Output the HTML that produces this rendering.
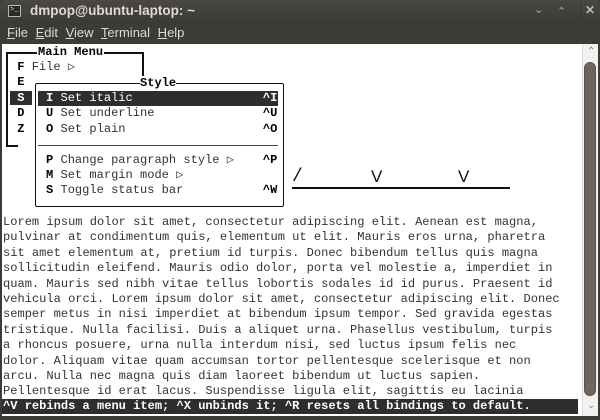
<!DOCTYPE html>
<html><head><style>
*{margin:0;padding:0;box-sizing:border-box}
body{width:600px;height:420px;overflow:hidden;background:#3c3b37;position:relative;font-family:"Liberation Sans",sans-serif}
#tb{position:absolute;left:0;top:0;width:600px;height:23px;background:linear-gradient(#4a4844,#3c3a36);border-radius:5px 5px 0 0}
#mb{position:absolute;left:0;top:23px;width:600px;height:21px;background:#3c3b37}
#term{position:absolute;left:2px;top:44px;width:596px;height:372px;background:#fff}
.t{position:absolute;font-family:"Liberation Mono",monospace;font-size:12.05px;line-height:15.4px;white-space:pre;color:#333}
.b{font-weight:bold;color:#000}
.ln{position:absolute;background:#111}
</style></head><body>
<div id="tb">
<div style="position:absolute;left:8px;top:5px;width:13px;height:12px;border:1px solid #bbb;background:#2a2a2a;border-radius:1px"><div style="position:absolute;left:1px;top:1px;color:#ddd;font-size:7px;line-height:7px;font-family:'Liberation Mono'">&gt;_</div></div>
<div style="position:absolute;left:30px;top:3px;color:#dfdbd2;font-weight:bold;font-size:13.5px">dmpop@ubuntu-laptop: ~</div>
<div style="position:absolute;left:534px;top:3px;color:#aaa;font-size:11px">&#8964;</div>
<div style="position:absolute;left:557px;top:5px;color:#aaa;font-size:11px">&#8963;</div>
<div style="position:absolute;left:580px;top:2px;width:1px;height:16px;background:#333"></div>
<div style="position:absolute;left:585px;top:3px;color:#bbb;font-size:12px;font-weight:bold">&#10005;</div>
</div>
<div id="mb"><div style="position:absolute;left:7px;top:2px;color:#dfdbd2;font-size:13px;word-spacing:4px"><u>F</u>ile <u>E</u>dit <u>V</u>iew <u>T</u>erminal <u>H</u>elp</div></div>
<div id="term">
<div class="t" style="left:1px;top:171px">Lorem ipsum dolor sit amet, consectetur adipiscing elit. Aenean est magna,
pulvinar at condimentum quis, elementum ut elit. Mauris eros urna, pharetra
sit amet elementum at, pretium id turpis. Donec bibendum tellus quis magna
sollicitudin eleifend. Mauris odio dolor, porta vel molestie a, imperdiet in
quam. Mauris sed nibh vitae tellus lobortis sodales id id purus. Praesent id
vehicula orci. Lorem ipsum dolor sit amet, consectetur adipiscing elit. Donec
semper metus in nisi imperdiet at bibendum ipsum tempor. Sed gravida egestas
tristique. Nulla facilisi. Duis a aliquet urna. Phasellus vestibulum, turpis
a rhoncus posuere, urna nulla interdum nisi, sed luctus ipsum felis nec
dolor. Aliquam vitae quam accumsan tortor pellentesque scelerisque et non
arcu. Nulla nec magna quis diam laoreet bibendum ut luctus sapien.
Pellentesque id erat lacus. Suspendisse ligula elit, sagittis eu lacinia</div>
<div style="position:absolute;left:0;top:355px;width:576px;height:15px;background:#2e2e2e"></div>
<div class="t b" style="left:1px;top:355px;color:#fff">^V rebinds a menu item; ^X unbinds it; ^R resets all bindings to default.</div>
<!-- main menu box -->
<div class="ln" style="left:4px;top:8px;width:1.5px;height:95px"></div>
<div class="ln" style="left:4px;top:8px;width:31px;height:1.5px"></div>
<div class="ln" style="left:102px;top:8px;width:40px;height:1.5px"></div>
<div class="ln" style="left:140px;top:8px;width:1.5px;height:30px"></div>
<div class="ln" style="left:4px;top:101px;width:12px;height:1.5px"></div>
<div class="t b" style="left:36px;top:1px">Main Menu</div>
<div class="t" style="left:8px;top:16px"> <b style="color:#000">F</b> File ▷
 <b style="color:#000">E</b>
<span style="background:#2e2e2e"> <b style="color:#fff">S</b> </span>
 <b style="color:#000">D</b>
 <b style="color:#000">Z</b></div>
<!-- style box -->
<div style="position:absolute;left:33px;top:39px;width:249px;height:124px;background:#fff;border:1.5px solid #111;border-radius:2px"></div>
<div class="t b" style="left:138px;top:32px;background:#fff">Style</div>
<div style="position:absolute;left:36px;top:47px;width:240px;height:15px;background:#2e2e2e"></div>
<div class="ln" style="left:36px;top:101px;width:240px;height:1.2px;background:#444"></div>
<div class="t" style="left:44px;top:47px"><b style="color:#fff">I</b><span style="color:#fff"> Set italic                  </span><b style="color:#fff">^I</b>
<b style="color:#000">U</b> Set underline               <b style="color:#000">^U</b>
<b style="color:#000">O</b> Set plain                   <b style="color:#000">^O</b>

<b style="color:#000">P</b> Change paragraph style ▷    <b style="color:#000">^P</b>
<b style="color:#000">M</b> Set margin mode ▷
<b style="color:#000">S</b> Toggle status bar           <b style="color:#000">^W</b></div>
<!-- decorations -->
<div class="t" style="left:290px;top:124px;font-size:18px;line-height:18px;color:#111">/</div>
<div class="t" style="left:369px;top:124px;font-size:17px;line-height:18px;color:#111;font-family:'Liberation Sans'">V</div>
<div class="t" style="left:456px;top:124px;font-size:17px;line-height:18px;color:#111;font-family:'Liberation Sans'">V</div>
<div class="ln" style="left:290px;top:143px;width:218px;height:1.5px"></div>
<!-- scrollbar -->
<div style="position:absolute;left:580px;top:0;width:16px;height:372px;background:#f2f1f0;border-left:1px solid #ddd"></div>
<div style="position:absolute;left:585px;top:2px;color:#777;font-size:10px">&#8963;</div>
<div style="position:absolute;left:582px;top:18px;width:12px;height:334px;background:#6e6560;border-radius:6px;border:1px solid #5a524d"></div>
<div style="position:absolute;left:585px;top:356px;color:#888;font-size:10px">&#8964;</div>
</div>
</body></html>
